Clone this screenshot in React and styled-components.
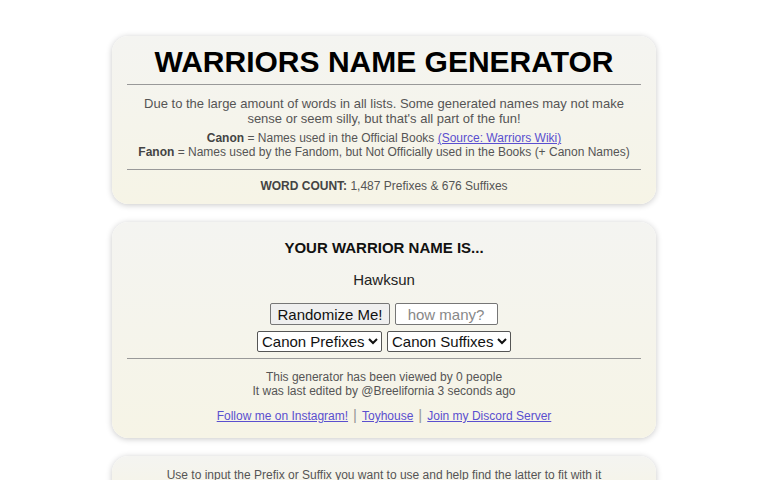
import React from "react";
import styled, { createGlobalStyle } from "styled-components";

const GlobalStyle = createGlobalStyle`
  body {
    margin: 0;
    background: #ffffff;
    font-family: "Liberation Sans", Arial, sans-serif;
  }
`;

function App() {
  return (
    <Page>
      <GlobalStyle />
      <Card $pad="8px 15px 11px">
        <Title>WARRIORS NAME GENERATOR</Title>
        <Rule $top="4px" />
        <Intro>
          Due to the large amount of words in all lists. Some generated names may
          not make sense or seem silly, but that's all part of the fun!
        </Intro>
        <Small $top="5px">
          <b>Canon</b> = Names used in the Official Books{" "}
          <Link href="#">(Source: Warriors Wiki)</Link>
          <br />
          <b>Fanon</b> = Names used by the Fandom, but Not Officially used in the
          Books (+ Canon Names)
        </Small>
        <Rule $top="10px" />
        <Small $top="9px">
          <b>WORD COUNT:</b> 1,487 Prefixes &amp; 676 Suffixes
        </Small>
      </Card>

      <Card $pad="17px 15px 15px">
        <Heading>YOUR WARRIOR NAME IS...</Heading>
        <Result>Hawksun</Result>
        <Controls>
          <Button>Randomize Me!</Button>
          <Count placeholder="how many?" />
        </Controls>
        <Controls $top="6px">
          <Select defaultValue="canon">
            <option value="canon">Canon Prefixes</option>
            <option value="fanon">Fanon Prefixes</option>
          </Select>
          <Select defaultValue="canon">
            <option value="canon">Canon Suffixes</option>
            <option value="fanon">Fanon Suffixes</option>
          </Select>
        </Controls>
        <Rule $top="6px" />
        <Small $top="11px">
          This generator has been viewed by 0 people
          <br />
          It was last edited by @Breelifornia 3 seconds ago
        </Small>
        <Links>
          <Link href="#">Follow me on Instagram!</Link>
          <Bar>|</Bar>
          <Link href="#">Toyhouse</Link>
          <Bar>|</Bar>
          <Link href="#">Join my Discord Server</Link>
        </Links>
      </Card>

      <Card $pad="12px 15px 16px">
        <Small>
          Use to input the Prefix or Suffix you want to use and help find the
          latter to fit with it
        </Small>
      </Card>
    </Page>
  );
}

export default App;

const Page = styled.div`
  display: flex;
  flex-direction: column;
  align-items: center;
  gap: 18px;
  padding: 36px 0 40px;
`;

const Card = styled.div`
  width: 544px;
  box-sizing: border-box;
  padding: ${(p) => p.$pad};
  border-radius: 16px;
  background: linear-gradient(#f4f4f1, #f6f4e6);
  box-shadow: 0 1px 6px rgba(0, 0, 0, 0.22);
  text-align: center;
  color: #555;
`;

const Title = styled.h1`
  margin: 0;
  font-size: 30px;
  line-height: 36px;
  font-weight: bold;
  color: #000;
`;

const Rule = styled.hr`
  margin: ${(p) => p.$top || "0"} 0 0;
  border: none;
  border-top: 1px solid #999;
  height: 0;
`;

const Intro = styled.p`
  margin: 11px 0 0;
  font-size: 13px;
  line-height: 15px;
  color: #555;
`;

const Small = styled.p`
  margin: ${(p) => p.$top || "0"} 0 0;
  font-size: 12px;
  line-height: 14px;
  color: #555;
  b {
    color: #444;
  }
`;

const Link = styled.a`
  color: #5a4fcf;
  text-decoration: underline;
`;

const Heading = styled.h2`
  margin: 0;
  font-size: 15px;
  line-height: 18px;
  font-weight: bold;
  color: #111;
`;

const Result = styled.div`
  margin-top: 14px;
  font-size: 15px;
  line-height: 18px;
  color: #222;
`;

const Controls = styled.div`
  display: flex;
  justify-content: center;
  gap: 5px;
  margin-top: ${(p) => p.$top || "14px"};
`;

const Button = styled.button`
  height: 22px;
  padding: 0 6px;
  font-family: "Liberation Sans", Arial, sans-serif;
  font-size: 15px;
  color: #111;
  background: #efefef;
  border: 1px solid #767676;
  border-radius: 2px;
`;

const Count = styled.input`
  width: 103px;
  height: 22px;
  box-sizing: border-box;
  padding: 0 4px;
  font-family: "Liberation Sans", Arial, sans-serif;
  font-size: 15px;
  text-align: center;
  background: #fff;
  border: 1px solid #767676;
  border-radius: 2px;
  &::placeholder {
    color: #888;
  }
`;

const Select = styled.select`
  height: 21px;
  padding: 0;
  font-family: "Liberation Sans", Arial, sans-serif;
  font-size: 15px;
  color: #111;
  background: #fff;
  border: 1px solid #555;
  border-radius: 2px;
`;

const Links = styled.div`
  margin-top: 10px;
  font-size: 12px;
  line-height: 14px;
`;

const Bar = styled.span`
  margin: 0 5px;
  font-size: 15px;
  color: #999;
`;
